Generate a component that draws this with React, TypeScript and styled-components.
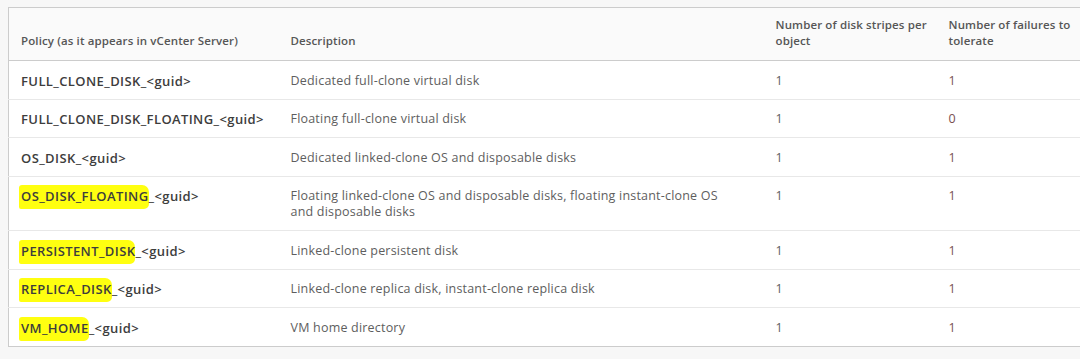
import React from 'react';
import styled, { createGlobalStyle } from 'styled-components';

const GlobalStyle = createGlobalStyle`
  html, body {
    margin: 0;
    padding: 0;
    background: #f7f7f7;
    overflow: hidden;
  }
  body {
    font-family: "Open Sans", Lato, sans-serif;
  }
`;

const Page = styled.div`
  padding: 7px 0 0 8px;
  width: 1100px;
`;

const Table = styled.table`
  width: 1090px;
  table-layout: fixed;
  border-collapse: collapse;
  background: #fff;
  border: 1px solid #cccccc;
`;

const HeadCell = styled.th`
  background: #fafafa;
  border-bottom: 1px solid #cccccc;
  color: #565656;
  font-size: 11.5px;
  font-weight: 600;
  letter-spacing: 0.12px;
  line-height: 16px;
  text-align: left;
  vertical-align: bottom;
  padding: 0 6px 11px 12px;
  height: 53px;
  box-sizing: border-box;
`;

const Row = styled.tr`
  & + & > td {
    border-top: 1px solid #e8e8e8;
  }
`;

const Cell = styled.td<{ $tone?: 'name' | 'num' | 'fail' }>`
  padding: 11.5px 24px 10px 12px;
  font-size: ${(p) => (p.$tone === 'name' ? '13px' : '12.5px')};
  letter-spacing: ${(p) => (p.$tone === 'name' ? '0.4px' : '0.2px')};
  line-height: 16px;
  vertical-align: top;
  color: ${(p) => (p.$tone === 'name' ? '#3d3d3d' : p.$tone === 'fail' ? '#7a5050' : '#5e5e5e')};
  font-weight: ${(p) => (p.$tone === 'name' ? 600 : 400)};
`;

const Mark = styled.span`
  background: #ffff10;
  padding: 2px 0 4px 2px;
  margin-left: -2px;
  border-radius: 3px 7px 5px 2px;
`;

type Policy = {
  mark?: string;
  name: string;
  desc: string;
  stripes: string;
  failures: string;
};

const rows: Policy[] = [
  { name: 'FULL_CLONE_DISK_<guid>', desc: 'Dedicated full-clone virtual disk', stripes: '1', failures: '1' },
  { name: 'FULL_CLONE_DISK_FLOATING_<guid>', desc: 'Floating full-clone virtual disk', stripes: '1', failures: '0' },
  { name: 'OS_DISK_<guid>', desc: 'Dedicated linked-clone OS and disposable disks', stripes: '1', failures: '1' },
  {
    mark: 'OS_DISK_FLOATING',
    name: '_<guid>',
    desc: 'Floating linked-clone OS and disposable disks, floating instant-clone OS and disposable disks',
    stripes: '1',
    failures: '1',
  },
  { mark: 'PERSISTENT_DISK', name: '_<guid>', desc: 'Linked-clone persistent disk', stripes: '1', failures: '1' },
  { mark: 'REPLICA_DISK', name: '_<guid>', desc: 'Linked-clone replica disk, instant-clone replica disk', stripes: '1', failures: '1' },
  { mark: 'VM_HOME', name: '_<guid>', desc: 'VM home directory', stripes: '1', failures: '1' },
];

const App = () => (
  <Page>
    <GlobalStyle />
    <Table>
      <colgroup>
        <col style={{ width: 270 }} />
        <col style={{ width: 485 }} />
        <col style={{ width: 173 }} />
        <col />
      </colgroup>
      <thead>
        <tr>
          <HeadCell>Policy (as it appears in vCenter Server)</HeadCell>
          <HeadCell>Description</HeadCell>
          <HeadCell>Number of disk stripes per object</HeadCell>
          <HeadCell>Number of failures to tolerate</HeadCell>
        </tr>
      </thead>
      <tbody>
        {rows.map((r) => (
          <Row key={(r.mark || '') + r.name}>
            <Cell $tone="name">
              {r.mark && <Mark>{r.mark}</Mark>}
              {r.name}
            </Cell>
            <Cell>{r.desc}</Cell>
            <Cell $tone="num">{r.stripes}</Cell>
            <Cell $tone="fail">{r.failures}</Cell>
          </Row>
        ))}
      </tbody>
    </Table>
  </Page>
);

export default App;
